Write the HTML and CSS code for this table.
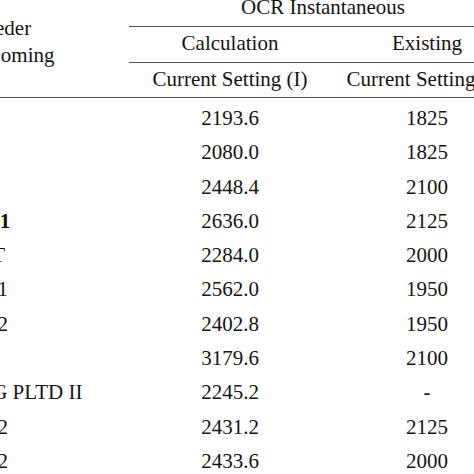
FILE: index.html
```html
<!DOCTYPE html>
<html>
<head>
<meta charset="utf-8">
<link rel="stylesheet" href="styles.css">
</head>
<body>
<div class="table">
  <div class="h feeder">Feeder<br>Incoming</div>
  <div class="h ocr">OCR Instantaneous</div>
  <div class="h sub calc">Calculation</div>
  <div class="h sub exist">Existing</div>
  <div class="h sub cs1">Current Setting (I)</div>
  <div class="h sub cs2">Current Setting (E)</div>

  <div class="c name">GI</div><div class="c">2193.6</div><div class="c">1825</div>
  <div class="c name">GI</div><div class="c">2080.0</div><div class="c">1825</div>
  <div class="c name">GI</div><div class="c">2448.4</div><div class="c">2100</div>
  <div class="c name bold">GI 1</div><div class="c">2636.0</div><div class="c">2125</div>
  <div class="c name">GIT</div><div class="c">2284.0</div><div class="c">2000</div>
  <div class="c name">GI 1</div><div class="c">2562.0</div><div class="c">1950</div>
  <div class="c name">GI 2</div><div class="c">2402.8</div><div class="c">1950</div>
  <div class="c name">GI</div><div class="c">3179.6</div><div class="c">2100</div>
  <div class="c name">ING PLTD II</div><div class="c">2245.2</div><div class="c">-</div>
  <div class="c name">GI 2</div><div class="c">2431.2</div><div class="c">2125</div>
  <div class="c name">GI 2</div><div class="c">2433.6</div><div class="c">2000</div>
</div>
</body>
</html>
```
FILE: styles.css
```css
html, body {
  margin: 0;
  padding: 0;
  background: #ffffff;
  overflow: hidden;
  width: 474px;
  height: 474px;
}

.table {
  display: grid;
  grid-template-columns: 169px 202px 192px;
  grid-template-rows: 33px 36px 35px;
  grid-auto-rows: 34.3px;
  margin: -6px 0 0 -40px;
  font-family: "Liberation Serif", "Times New Roman", serif;
  font-size: 21px;
  color: #141414;
}

.h {
  box-sizing: border-box;
  line-height: 24px;
  white-space: nowrap;
  text-align: center;
}

.feeder {
  grid-column: 1;
  grid-row: 1 / 4;
  text-align: left;
  padding: 21px 0 0 14px;
  line-height: 27px;
  border-bottom: 1.5px solid #555;
}

.ocr {
  grid-column: 2 / 4;
  grid-row: 1;
  padding: 1px 6px 0 0;
  border-bottom: 1.5px solid #555;
}

.sub {
  padding-top: 4px;
  border-bottom: 1.5px solid #555;
}

.calc { grid-column: 2; grid-row: 2; }
.exist { grid-column: 3; grid-row: 2; }
.cs1 { grid-column: 2; grid-row: 3; }
.cs2 { grid-column: 3; grid-row: 3; }

.c {
  box-sizing: border-box;
  padding-top: 3px;
  line-height: 34.3px;
  text-align: center;
  white-space: nowrap;
}

.name {
  text-align: left;
  padding-left: 10px;
}

.bold {
  font-weight: bold;
}
```
